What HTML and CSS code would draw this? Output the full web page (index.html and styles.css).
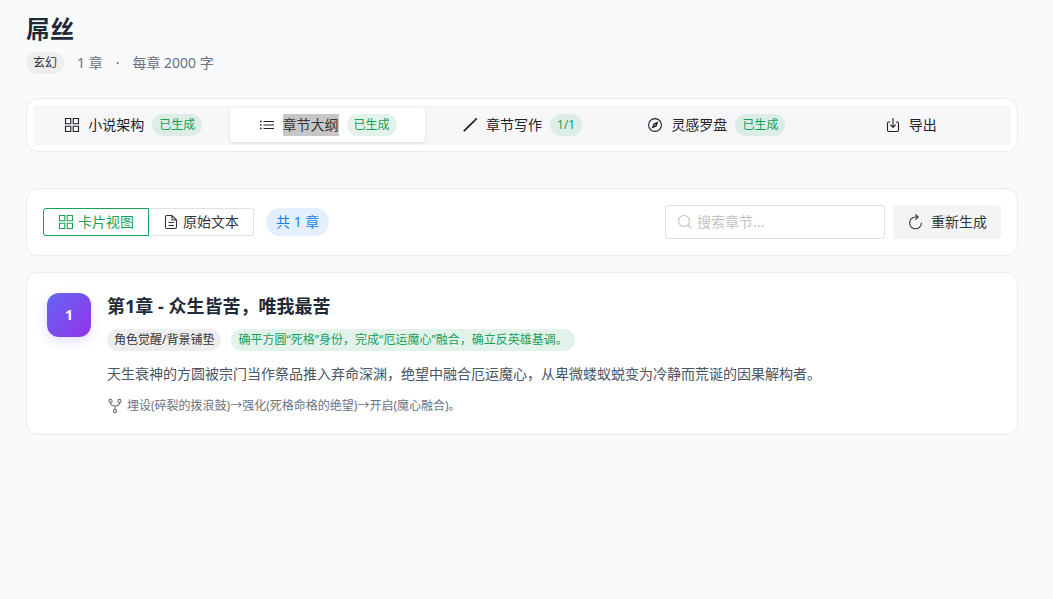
FILE: index.html
```html
<!DOCTYPE html>
<html lang="zh-CN">
<head>
<meta charset="utf-8">
<meta name="viewport" content="width=device-width, initial-scale=1">
<title>屌丝</title>
<link rel="stylesheet" href="styles.css">
</head>
<body>
<main class="page">
  <header class="header">
    <h1 class="title">屌丝</h1>
    <div class="meta">
      <span class="tag">玄幻</span>
      <span>1 章</span>
      <span>·</span>
      <span>每章 2000 字</span>
    </div>
  </header>

  <nav class="panel tabs">
    <div class="rail" role="tablist">
      <button class="tab" role="tab">
        <svg class="icon" viewBox="0 0 16 16"><path d="M1.5 1.5h5.300v5.300h-5.300zM9.200 1.500h5.300v5.300h-5.300zM1.500 9.200h5.300v5.300h-5.300zM9.200 9.200h5.300v5.300h-5.300z"/></svg>
        <span>小说架构</span><span class="tag tag-green">已生成</span>
      </button>
      <button class="tab tab-active" role="tab" aria-selected="true">
        <svg class="icon" viewBox="0 0 16 16"><path d="M4.5 4.500H15M4.500 8H15M4.500 11.500H15"/><path class="dots" d="M1 3.700h1.600v1.600H1zM1 7.200h1.600v1.600H1zM1 10.700h1.600v1.600H1z"/></svg>
        <span class="marked">章节大纲</span><span class="tag tag-green">已生成</span>
      </button>
      <button class="tab" role="tab">
        <svg class="icon" viewBox="0 0 16 16"><path class="pen" d="M2.300 13.700L12.300 3.900"/><path class="pen" d="M13.300 2.800l.8-.8"/></svg>
        <span>章节写作</span><span class="tag tag-green">1/1</span>
      </button>
      <button class="tab" role="tab">
        <svg class="icon" viewBox="0 0 16 16"><circle cx="8" cy="8" r="6.400"/><path class="solid" d="M11.400 4.600L9.600 9.400 4.600 11.400 6.500 6.500z"/><circle class="hole" cx="8" cy="8" r=".7"/></svg>
        <span>灵感罗盘</span><span class="tag tag-green">已生成</span>
      </button>
      <button class="tab" role="tab">
        <svg class="icon" viewBox="0 0 16 16"><path d="M5.200 5H3.700Q2.500 5 2.500 6.200V13Q2.500 14.500 4 14.500H12Q13.500 14.500 13.500 13V6.200Q13.500 5 12.300 5H10.800M8 1V10.300M5.300 7.700L8 10.400 10.700 7.700"/></svg>
        <span>导出</span>
      </button>
    </div>
  </nav>

  <section class="panel toolbar">
    <div class="views">
      <button class="view view-active">
        <svg class="icon" viewBox="0 0 16 16"><path d="M1.500 1.500h5.300v5.300h-5.300zM9.200 1.500h5.300v5.300h-5.300zM1.500 9.200h5.300v5.300h-5.300zM9.200 9.200h5.300v5.300h-5.300z"/></svg>卡片视图
      </button>
      <button class="view">
        <svg class="icon" viewBox="0 0 16 16"><path d="M9 1.500H4Q2.500 1.500 2.500 3V13Q2.500 14.500 4 14.500H12Q13.500 14.500 13.500 13V6zM9 1.500V6H13.500M5.500 8.500H11M5.500 11.500H11"/></svg>原始文本
      </button>
    </div>
    <span class="count">共 1 章</span>
    <label class="search">
      <svg class="icon" viewBox="0 0 16 16"><circle cx="7" cy="7" r="5.500"/><path d="M11 11l3.500 3.500"/></svg>
      <input class="search-input" type="text" placeholder="搜索章节..." aria-label="搜索章节">
    </label>
    <button class="regen">
      <svg class="icon" viewBox="0 0 16 16"><path d="M14.400 8.800A5.900 5.900 0 1 1 8.600 3H10.900M8.400.5L11.100 3 8.400 5.600"/></svg>重新生成
    </button>
  </section>

  <article class="panel chapter">
    <div class="number">1</div>
    <div class="body">
      <h2 class="chapter-title">第1章 - 众生皆苦，唯我最苦</h2>
      <div class="tags">
        <span class="tag">角色觉醒/背景铺垫</span>
        <span class="tag tag-green">确平方圆“死格”身份，完成“厄运魔心”融合，确立反英雄基调。</span>
      </div>
      <p class="summary">天生衰神的方圆被宗门当作祭品推入弃命深渊，绝望中融合厄运魔心，从卑微蝼蚁蜕变为冷静而荒诞的因果解构者。</p>
      <p class="thread">
        <svg class="icon" viewBox="0 0 16 16"><circle cx="3.500" cy="3" r="1.600"/><circle cx="12.500" cy="3" r="1.600"/><circle cx="8" cy="13" r="1.600"/><path d="M3.500 4.600Q3.500 8 8 8Q12.500 8 12.500 4.600M8 8V11.400"/></svg>
        <span>埋设(碎裂的拨浪鼓)→强化(死格命格的绝望)→开启(魔心融合)。</span>
      </p>
    </div>
  </article>
</main>
</body>
</html>
```
FILE: styles.css
```css
* { box-sizing: border-box; }
body {
  margin: 0;
  background: #f9fafc;
  color: #333639;
  font: 14px/22px "Noto Sans", "Noto Sans CJK SC", sans-serif;
}
button, input { font: inherit; color: inherit; margin: 0; }
button { border: 0; background: none; padding: 0; cursor: pointer; white-space: nowrap; }
h1, h2, p { margin: 0; }

.page { padding: 12px 35px 24px 26px; }
.icon {
  width: 16px;
  height: 16px;
  flex: none;
  fill: none;
  stroke: currentColor;
  stroke-width: 1.1;
}
.icon .dots, .icon .solid { fill: currentColor; stroke: none; }
.icon .hole { fill: #f7f7fa; stroke: none; }
.icon .pen { stroke-width: 1.8; stroke-linecap: round; }

.panel {
  background: #fff;
  border: 1px solid #e9ebef;
  border-radius: 12px;
}
.tag {
  padding: 0 7px;
  border-radius: 11px;
  background: #eeeeef;
  color: #333639;
  font-size: 12px;
  line-height: 22px;
}
.tag-green { background: rgba(24, 160, 88, 0.12); color: #18a058; }

.title { font-size: 24px; line-height: 34px; color: #1f2937; }
.meta {
  display: flex;
  gap: 13px;
  margin-top: 6px;
  color: #6b7280;
}

.tabs { margin-top: 24px; padding: 6px; }
.rail {
  display: grid;
  grid-template-columns: repeat(5, 1fr);
  padding: 3px;
  border-radius: 3px;
  background: #f7f7fa;
}
.tab {
  display: flex;
  align-items: center;
  justify-content: center;
  gap: 8px;
  height: 34px;
  border-radius: 3px;
  color: #1f2225;
}
.tab-active { background: #fff; box-shadow: 0 1px 3px rgba(0, 0, 0, 0.12); }
.marked { background: #c7c7c7; color: #333639; }

.toolbar {
  display: flex;
  align-items: center;
  margin-top: 36px;
  padding: 16px;
}
.views { display: flex; }
.view {
  display: flex;
  align-items: center;
  gap: 4px;
  height: 28px;
  padding: 0 14px;
  border: 1px solid #e0e0e6;
  border-left: 0;
  border-radius: 0 3px 3px 0;
}
.view-active {
  border: 1px solid #18a058;
  border-radius: 3px 0 0 3px;
  color: #18a058;
}
.count {
  margin-left: 12px;
  padding: 0 10px;
  border-radius: 14px;
  background: #e4effe;
  color: #2080f0;
  line-height: 28px;
}
.search {
  display: flex;
  align-items: center;
  gap: 4px;
  width: 220px;
  height: 34px;
  margin-left: auto;
  padding: 0 11px;
  border: 1px solid #e0e0e6;
  border-radius: 3px;
  color: #c2c2c2;
}
.search-input {
  flex: 1;
  min-width: 0;
  padding: 0;
  border: 0;
  outline: 0;
  background: none;
  color: #333639;
}
.search-input::placeholder { color: #c2c2c2; opacity: 1; }
.regen {
  display: flex;
  align-items: center;
  gap: 8px;
  height: 34px;
  margin-left: 8px;
  padding: 0 14px;
  border-radius: 3px;
  background: #f3f5f5;
}

.chapter {
  display: flex;
  gap: 16px;
  margin-top: 16px;
  padding: 20px;
}
.number {
  flex: none;
  width: 44px;
  height: 44px;
  border-radius: 12px;
  background: linear-gradient(135deg, #6366f1, #9333ea);
  box-shadow: 0 4px 12px rgba(99, 102, 241, 0.2);
  color: #fff;
  font-weight: 700;
  line-height: 44px;
  text-align: center;
}
.body { flex: 1; min-width: 0; }
.chapter-title { font-size: 18px; line-height: 27px; color: #1f2937; }
.tags { display: flex; flex-wrap: wrap; gap: 10px; margin-top: 9px; }
.summary { margin-top: 12px; color: #4b5563; }
.thread {
  display: flex;
  align-items: center;
  gap: 4px;
  margin-top: 12px;
  color: #6b7280;
  font-size: 12px;
  line-height: 17px;
}
```
